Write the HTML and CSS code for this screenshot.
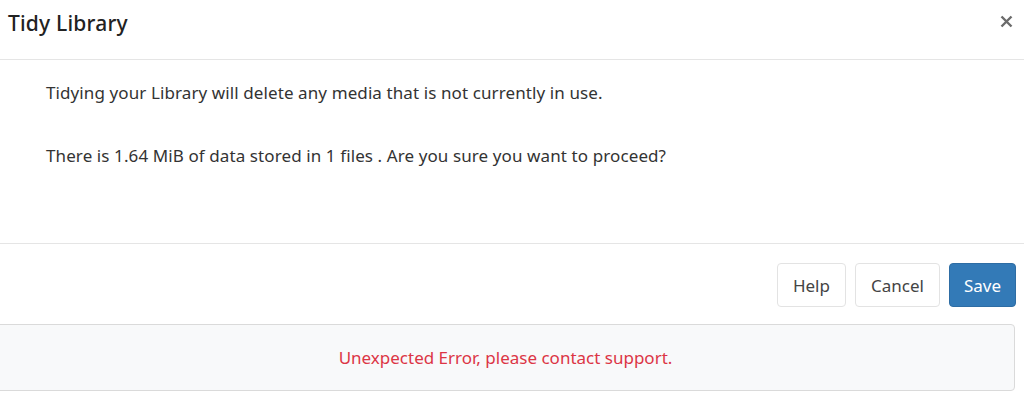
FILE: index.html
```html
<!DOCTYPE html>
<html lang="en">
<head>
<meta charset="utf-8">
<title>Tidy Library</title>
<link rel="stylesheet" href="styles.css">
</head>
<body>
<div class="modal">
  <div class="modal-header">
    <h4 class="modal-title">Tidy Library</h4>
    <button class="close" type="button" aria-label="Close">
      <svg width="13" height="13" viewBox="0 0 13 13"><path d="M1.5 1.5 L11.5 11.5 M11.5 1.5 L1.5 11.5" stroke="#6b6b6b" stroke-width="2.4" stroke-linecap="butt"/></svg>
    </button>
  </div>
  <div class="modal-body">
    <p>Tidying your Library will delete any media that is not currently in use.</p>
    <p>There is 1.64 MiB of data stored in 1 files . Are you sure you want to proceed?</p>
  </div>
  <div class="modal-footer">
    <div class="actions">
      <button class="btn btn-default" type="button">Help</button>
      <button class="btn btn-default" type="button">Cancel</button>
      <button class="btn btn-primary" type="button">Save</button>
    </div>
    <div class="error-box">Unexpected Error, please contact support.</div>
  </div>
</div>
</body>
</html>
```
FILE: styles.css
```css
* { box-sizing: border-box; }
html, body { margin: 0; padding: 0; background: #fff; }
body {
  font-family: "Noto Sans", "Open Sans", sans-serif;
  color: #212529;
  width: 1024px;
  height: 398px;
  overflow: hidden;
}
.modal { width: 1024px; }
.modal-header {
  display: flex;
  justify-content: space-between;
  align-items: flex-start;
  height: 60px;
  padding: 9px 11px 0 8px;
  border-bottom: 1px solid #e5e5e5;
}
.modal-title {
  margin: 0;
  font-size: 21px;
  font-weight: 500;
  letter-spacing: 0.2px;
  line-height: 28px;
  color: #222;
}
.close {
  border: 0;
  background: none;
  padding: 0;
  margin-top: 6px;
  width: 13px;
  height: 13px;
  display: flex;
}
.modal-body {
  height: 184px;
  padding: 20px 20px 0 46px;
  border-bottom: 1px solid #e5e5e5;
}
.modal-body p {
  margin: 0 0 38px;
  font-size: 17px;
  letter-spacing: 0.1px;
  line-height: 25px;
  color: #333;
}
.modal-footer {
  padding: 19px 8px 0 0;
}
.actions {
  display: flex;
  justify-content: flex-end;
  gap: 9px;
}
.btn {
  font-family: inherit;
  font-size: 17px;
  height: 44px;
  padding: 0 15px;
  border-radius: 4px;
  border: 1px solid #e3e3e3;
  background: #fff;
  color: #444;
}
.btn-primary {
  background: #337ab7;
  border-color: #2e6da4;
  color: #fff;
  padding: 0 14px;
}
.error-box {
  margin: 17px 1px 0 -4px;
  height: 67px;
  display: flex;
  align-items: center;
  justify-content: center;
  background: #f8f9fa;
  border: 1px solid #dadada;
  border-radius: 4px;
  color: #dc3545;
  font-size: 17px;
}
```
